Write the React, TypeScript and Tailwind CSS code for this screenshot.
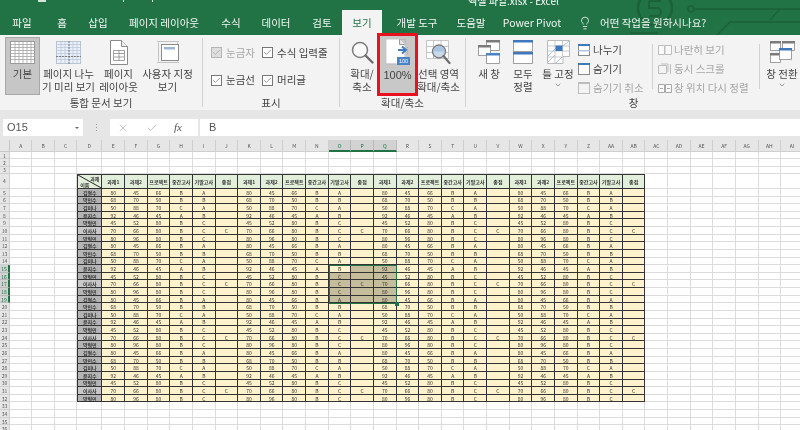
import { Check, ChevronDown, Lightbulb, X } from "lucide-react";

const tabs: [string, string][] = [
  ["파일", "w-[44px]"],
  ["홈", "w-[36px]"],
  ["삽입", "w-[36px]"],
  ["페이지 레이아웃", "w-[96px]"],
  ["수식", "w-[38px]"],
  ["데이터", "w-[52px]"],
  ["검토", "w-[40px]"],
];

const colNames = "A B C D E F G H I J K L M N O P Q R S T U V W X Y Z AA AB AC AD AE AF AG AH AI".split(" ");
const heads = ["과제1", "과제2", "프로젝트", "중간고사", "기말고사", "총점"];
const people: [string, string[]][] = [
  ["김철수", ["80", "45", "66", "B", "A", ""]],
  ["박민수", ["68", "70", "50", "B", "B", ""]],
  ["김미나", ["50", "88", "70", "C", "A", ""]],
  ["윤지수", ["92", "46", "45", "A", "B", ""]],
  ["박형민", ["45", "52", "80", "B", "C", ""]],
  ["이사사", ["70", "66", "80", "B", "C", "C"]],
  ["박형민", ["80", "96", "80", "B", "C", ""]],
];

function cellClass(r: number, c: number) {
  const inTable = r >= 4 && r <= 32 && c >= 4 && c <= 28;
  if (!inTable) return "border-r border-b border-[#dcdcdc]";
  const edges = `border-r border-b border-[#151515]${c === 4 ? " border-l" : ""}${r === 4 ? " border-t" : ""}`;
  if (r === 4) return `${edges} bg-[#e2efda] font-bold`;
  if (c === 4) return `${edges} ${(r - 5) % 7 === 5 ? "bg-[#c8c8c8]" : "bg-[#b4b4b4]"} font-bold`;
  const selected = r >= 15 && r <= 19 && c >= 15 && c <= 17 && !(r === 15 && c === 15);
  return `${edges} ${selected ? "bg-[#c6bd9d]" : "bg-[#fff2cc]"}`;
}

function Sheet() {
  const rows = Array.from({ length: 37 }, (_, i) => i + 1);
  return (
    <div className="relative h-[290px] overflow-hidden bg-white">
      <div className="grid w-[806px] grid-cols-[10px_22.4px_22.4px_22.4px_25.3px_repeat(31,22.64px)] grid-rows-[12px_7.4px_7.3px_7.3px_15px_repeat(33,7.64px)] text-[5px] leading-none text-[#333]">
        <div className="border-r border-b border-[#c8c8c8] bg-[#e6e6e6]" />
        {colNames.map((n, i) => (
          <div
            key={n}
            className={`flex items-center justify-center border-r ${
              i >= 14 && i <= 16
                ? "border-b-2 border-b-[#217346] border-r-[#bbb] bg-[#d2d2d2] text-[#1d6b41]"
                : "border-b border-[#cfcfcf] bg-[#e6e6e6] text-[#555]"
            }`}
          >
            {n}
          </div>
        ))}
        {rows.map((r) => (
          <div key={r} className="contents">
            <div
              className={`flex items-center justify-center border-b ${
                r >= 15 && r <= 19
                  ? "border-r-2 border-r-[#217346] border-b-[#bbb] bg-[#d2d2d2] text-[#1d6b41]"
                  : "border-r border-[#cfcfcf] bg-[#e6e6e6] text-[#555]"
              }`}
            >
              {r}
            </div>
            {colNames.map((_, i) => {
              const c = i + 1;
              let text = "";
              if (r === 4 && c > 4 && c <= 28) text = heads[(c - 5) % 6];
              if (r > 4 && r <= 32 && c >= 4 && c <= 28) {
                const p = people[(r - 5) % 7];
                text = c === 4 ? p[0] : p[1][(c - 5) % 6];
              }
              return (
                <div key={c} className={`relative flex items-center justify-center overflow-hidden whitespace-nowrap ${cellClass(r, c)}`}>
                  {r === 4 && c === 4 ? (
                    <>
                      <svg className="absolute inset-0 h-full w-full" viewBox="0 0 25 15" preserveAspectRatio="none">
                        <line x1="0" y1="0" x2="25" y2="15" stroke="#111" strokeWidth="1" />
                      </svg>
                      <span className="absolute top-[1px] right-[2px] font-bold">과제</span>
                      <span className="absolute bottom-[1px] left-[2px] font-bold">이름</span>
                    </>
                  ) : (
                    text
                  )}
                </div>
              );
            })}
          </div>
        ))}
      </div>
      {/* selection O15:Q19 */}
      <div className="absolute top-[125px] left-[329px] h-[39px] w-[68px] border-[1.5px] border-[#217346]" />
      <div className="absolute top-[162px] left-[395px] h-[4px] w-[4px] bg-[#217346]" />
    </div>
  );
}

function Big({ icon, lines, w, chevron }: { icon: React.ReactNode; lines: string[]; w: string; chevron?: boolean }) {
  return (
    <div className={`flex h-[58px] shrink-0 flex-col items-center ${w}`}>
      <div className="flex h-[30px] shrink-0 items-center justify-center">{icon}</div>
      {lines.map((l) => (
        <div key={l} className="h-[13px] text-center leading-[13px] whitespace-nowrap">
          {l}
        </div>
      ))}
      {chevron && <ChevronDown className="mt-[1px] h-[8px] w-[8px] text-[#666]" />}
    </div>
  );
}

function Box({ label, disabled }: { label: string; disabled?: boolean }) {
  return (
    <div className={`flex h-[25px] items-center gap-[4px] ${disabled ? "text-[#a6a6a6]" : ""}`}>
      <div className={`flex h-[11px] w-[11px] items-center justify-center border ${disabled ? "border-[#b5b5b5] bg-[#dedede]" : "border-[#777] bg-white"}`}>
        <Check className={`h-[9px] w-[9px] ${disabled ? "text-[#999]" : "text-[#555]"}`} strokeWidth={1.6} />
      </div>
      {label}
    </div>
  );
}

function Group({ label, w, children }: { label: string; w: string; children: React.ReactNode }) {
  return (
    <div className={`flex h-[75px] shrink-0 flex-col ${w}`}>
      <div className="flex h-[60px] shrink-0">{children}</div>
      <div className="h-[15px] text-center leading-[15px]">{label}</div>
    </div>
  );
}

const Sep = () => <div className="mt-[3px] h-[69px] w-px shrink-0 bg-[#d2d2d2]" />;

function GridIcon({ fill, line, dash }: { fill: string; line: string; dash?: boolean }) {
  return (
    <svg width="25" height="23" viewBox="0 0 25 23">
      <rect x="0.5" y="0.5" width="24" height="22" fill={fill} stroke={line} />
      {[3.5, 6.5, 9.5, 12.5, 15.5, 18.5].map((y) => (
        <line key={y} x1="0" x2="25" y1={y} y2={y} stroke={line} strokeWidth="0.7" />
      ))}
      {[5, 9, 13, 17, 21].map((x) => (
        <line key={x} y1="0" y2="23" x1={x} x2={x} stroke={line} strokeWidth="0.7" />
      ))}
      {dash && <line x1="13" x2="13" y1="0" y2="23" stroke="#7f7f7f" strokeWidth="1" strokeDasharray="2 1" />}
      {dash && <line x1="0" x2="25" y1="15.5" y2="15.5" stroke="#7f7f7f" strokeWidth="1" strokeDasharray="2 1" />}
    </svg>
  );
}

function PageLayoutIcon() {
  return (
    <svg width="18" height="25" viewBox="0 0 18 25">
      <path d="M.5.5h11l6 6v18H.5z" fill="#fff" stroke="#8a8a8a" />
      <path d="M11.5.5v6h6" fill="#eee" stroke="#8a8a8a" />
      <path d="M3.5 10.5h11v10h-11zM3.5 13.5h11M3.5 17h11M9 10.5v10" fill="none" stroke="#8a8a8a" strokeWidth=".8" />
    </svg>
  );
}

function CustomViewIcon() {
  return (
    <svg width="24" height="24" viewBox="0 0 24 24">
      <path d="M2.5 2.5v19M21.5 2.5v19M1 1.5h22M1 22.5h22" stroke="#b5b5b5" strokeWidth=".8" fill="none" />
      <rect x="5.5" y="4.5" width="17" height="16" fill="#fff" stroke="#8a8a8a" />
      <rect x="8" y="7" width="11" height="2.5" fill="#9db7d8" />
    </svg>
  );
}

function GlassIcon() {
  return (
    <svg width="23" height="23" viewBox="0 0 23 23">
      <circle cx="9" cy="9" r="7.5" fill="#fafafa" stroke="#7d7d7d" strokeWidth="1.5" />
      <path d="M14.5 14.5l7 7" stroke="#6d6d6d" strokeWidth="2.4" strokeLinecap="round" />
    </svg>
  );
}

function HundredIcon() {
  return (
    <svg width="24" height="26" viewBox="0 0 24 26">
      <path d="M.5.5h13l5 5v19H.5z" fill="#fff" />
      <path d="M13.5.5h6v6M21.5 8v7M.5 25h10" stroke="#a8a8a8" strokeDasharray="1 1" fill="none" />
      <path d="M13.5.5v5h5" fill="#e6e6e6" stroke="#9a9a9a" />
      <path d="M12 11h7M16 7.5L20 11l-4 3.5" fill="none" stroke="#3f7fc1" strokeWidth="2" />
      <rect x="11" y="18" width="13" height="8" fill="#4a84c4" />
      <text x="17.5" y="24.2" fontSize="5.5" fill="#fff" textAnchor="middle" fontFamily="Liberation Sans">100</text>
    </svg>
  );
}

function ZoomSelIcon() {
  return (
    <svg width="25" height="25" viewBox="0 0 25 25">
      <path d="M.5.5h22v18H.5zM.5 6.5h22M.5 12.5h22M7.5.5v18M15 .5v18" fill="#fff" stroke="#b9b9b9" strokeWidth=".8" />
      <circle cx="13" cy="11.5" r="6.5" fill="#c9d9ec" stroke="#7d7d7d" strokeWidth="1.4" />
      <path d="M7.5 11.5a5.5 5.5 0 0 1 11 0z" fill="#a9c4e3" />
      <path d="M17.5 16l6 7" stroke="#6d6d6d" strokeWidth="2.2" strokeLinecap="round" />
    </svg>
  );
}

function Win({ x, y, w, h, bar }: { x: number; y: number; w: number; h: number; bar: string }) {
  return (
    <g>
      <rect x={x + 0.5} y={y + 0.5} width={w - 1} height={h - 1} fill="#fff" stroke="#8a8a8a" strokeWidth=".8" />
      <rect x={x} y={y} width={w} height={2.5} fill={bar} />
    </g>
  );
}

function NewWindowIcon() {
  return (
    <svg width="22" height="24" viewBox="0 0 22 24">
      <Win x={8} y={0} w={14} h={11} bar="#7b7b7b" />
      <Win x={0} y={5} w={13} h={11} bar="#7b7b7b" />
      <Win x={8} y={13} w={14} h={11} bar="#4a84c4" />
    </svg>
  );
}

function ArrangeIcon() {
  return (
    <svg width="20" height="24" viewBox="0 0 20 24">
      <Win x={0} y={0} w={20} h={12} bar="#3f79bb" />
      <Win x={0} y={12} w={20} h={12} bar="#3f79bb" />
    </svg>
  );
}

function FreezeIcon() {
  return (
    <svg width="23" height="24" viewBox="0 0 23 24">
      <path d="M.5.5h22v16H16v7H.5z" fill="#fff" stroke="#a9a9a9" strokeWidth=".8" />
      <path d="M.5 6h22M.5 11h22M.5 17h15M8 .5v23M15.5 .5v16" stroke="#b5b5b5" strokeWidth=".7" fill="none" />
      <path d="M1 16l8-8M1 22l7-7M9 23l6-6M16 6l6-5" stroke="#9ec0df" strokeWidth=".9" />
      <rect x="8.5" y="5.5" width="7" height="5.5" fill="#3f79bb" />
    </svg>
  );
}

function SmallWin({ gray, split }: { gray?: boolean; split?: boolean }) {
  return (
    <svg width="12" height="12" viewBox="0 0 12 12" className="shrink-0">
      <rect x=".5" y=".5" width="11" height="11" fill={gray ? "#f3f3f3" : "#fff"} stroke={gray ? "#bdbdbd" : "#8a8a8a"} />
      <rect x="0" y="0" width="12" height="2" fill={gray ? "#bdbdbd" : "#3f79bb"} />
      {split && <rect x="0" y="6" width="12" height="1.4" fill="#a9c4e3" />}
    </svg>
  );
}

function SideBySideIcon({ kind }: { kind: number }) {
  return (
    <svg width="14" height="12" viewBox="0 0 14 12" className="shrink-0">
      {kind === 0 && <path d="M.5 1.5h6v9h-6zM7 1.5h6.5v9H7z" fill="#fafafa" stroke="#bdbdbd" />}
      {kind === 1 && <path d="M.5 2.5h8v8h-8zM3 1h7v8M12.5 1v10" fill="none" stroke="#bdbdbd" />}
      {kind === 2 && <path d="M.5 2.5h6v8h-6zM7.5 2.5h6v8h-6zM2 6.5h3M9 6.5h3" fill="#fafafa" stroke="#a8a8a8" />}
    </svg>
  );
}

function SwitchIcon() {
  return (
    <svg width="25" height="22" viewBox="0 0 25 22">
      <Win x={0} y={0} w={11} h={10} bar="#7b7b7b" />
      <Win x={12} y={0} w={13} h={10} bar="#7b7b7b" />
      <Win x={0} y={12} w={11} h={10} bar="#7b7b7b" />
      <Win x={9} y={7} w={13} h={12} bar="#3f79bb" />
    </svg>
  );
}

export default function App() {
  return (
    <div className="h-[430px] w-[800px] overflow-hidden bg-[#e6e6e6] font-['Noto_Sans_CJK_KR','Noto_Sans',sans-serif] text-[10.5px] text-[#444] blur-[0.35px]">
      {/* title + tabs */}
      <div className="relative h-[35px] overflow-hidden bg-[#217346] text-[#f2f7f4]">
        <svg className="absolute top-0 left-[600px]" width="200" height="35" viewBox="0 0 200 35" fill="none" stroke="#1b6239" strokeWidth="1.6">
          <circle cx="55" cy="8" r="17" strokeWidth="2.5" />
          <path d="M49 1h12M49 1v7h8a4 4 0 0 1 0 8h-8" strokeWidth="2" />
          <circle cx="91" cy="9" r="3" />
          <path d="M94 9h106M117 35l13-13h70M30 33h28M180 9l-10 11" />
        </svg>
        <div className="absolute -top-[7px] left-[468px] whitespace-nowrap text-[10px] text-white">엑셀 파일.xlsx - Excel</div>
        <div className="absolute top-0 left-[38px] h-[2px] w-[8px] bg-[#d5e5db]" />
        <div className="absolute top-0 left-[123px] h-[2px] w-[30px] border-x border-[#d5e5db]" />
        <div className="h-[10px]" />
        <div className="relative flex h-[25px] items-center">
          {tabs.map(([t, w]) => (
            <div key={t} className={`text-center ${w}`}>
              {t}
            </div>
          ))}
          <div className="flex h-full w-[40px] items-center justify-center bg-[#f3f3f3] text-[#217346]">보기</div>
          <div className="w-[70px] text-center">개발 도구</div>
          <div className="w-[38px] text-center">도움말</div>
          <div className="w-[84px] text-center">Power Pivot</div>
          <Lightbulb className="ml-[4px] h-[14px] w-[14px]" strokeWidth={1.4} />
          <div className="ml-[8px] whitespace-nowrap">어떤 작업을 원하시나요?</div>
        </div>
      </div>

      {/* ribbon */}
      <div className="flex h-[75px] bg-[#f3f3f3]">
        <Group label="통합 문서 보기" w="w-[202px]">
          <div className="flex pt-[2px] pl-[5px]">
            <div className="shrink-0">
              <div className="flex h-[58px] w-[35px] flex-col items-center border border-[#a8a8a8] bg-[#c6c6c6]">
                <div className="flex h-[29px] items-center">
                  <GridIcon fill="#fff" line="#9a9a9a" />
                </div>
                <div className="leading-[13px]">기본</div>
              </div>
            </div>
            <Big w="w-[57px]" lines={["페이지 나누", "기 미리 보기"]} icon={<GridIcon fill="#e9f0fa" line="#b8c4d4" dash />} />
            <Big w="w-[43px]" lines={["페이지", "레이아웃"]} icon={<PageLayoutIcon />} />
            <Big w="w-[55px]" lines={["사용자 지정", "보기"]} icon={<CustomViewIcon />} />
          </div>
        </Group>
        <Sep />
        <Group label="표시" w="w-[136px]">
          <div className="grid grid-cols-[51px_auto] pt-[5px] pl-[8px]">
            <Box label="눈금자" disabled />
            <Box label="수식 입력줄" />
            <Box label="눈금선" />
            <Box label="머리글" />
          </div>
        </Group>
        <Sep />
        <Group label="확대/축소" w="w-[125px]">
          <div className="flex pt-[2px] pl-[7px]">
            <Big w="w-[30px]" lines={["확대/", "축소"]} icon={<GlassIcon />} />
            <div className="relative z-10 -mt-[4px] flex h-[63px] w-[41px] shrink-0 flex-col items-center border-[3px] border-[#e8111d] bg-[#c8c8c8]">
              <div className="flex h-[31px] items-center">
                <HundredIcon />
              </div>
              <div className="mt-[2px] font-['Liberation_Sans',sans-serif] text-[11px] leading-[13px]">100%</div>
            </div>
            <Big w="w-[41px]" lines={["선택 영역", "확대/축소"]} icon={<ZoomSelIcon />} />
          </div>
        </Group>
        <Sep />
        <Group label="창" w="w-[335px]">
          <div className="flex pt-[2px] pl-[6px]">
            <Big w="w-[34px]" lines={["새 창"]} icon={<NewWindowIcon />} />
            <Big w="w-[34px]" lines={["모두", "정렬"]} icon={<ArrangeIcon />} />
            <Big w="w-[36px]" lines={["틀 고정"]} icon={<FreezeIcon />} chevron />
            <div className="w-[76px] shrink-0 pt-[3px] pl-[2px]">
              <div className="flex h-[19px] items-center gap-[3px]"><SmallWin split />나누기</div>
              <div className="flex h-[19px] items-center gap-[3px]"><SmallWin />숨기기</div>
              <div className="flex h-[19px] items-center gap-[3px] text-[#a6a6a6]"><SmallWin gray />숨기기 취소</div>
            </div>
            <div className="mt-[7px] h-[45px] w-px shrink-0 bg-[#d2d2d2]" />
            <div className="w-[106px] shrink-0 pt-[3px] pl-[5px] text-[#a6a6a6]">
              <div className="flex h-[19px] items-center gap-[2px]"><SideBySideIcon kind={0} />나란히 보기</div>
              <div className="flex h-[19px] items-center gap-[2px]"><SideBySideIcon kind={1} />동시 스크롤</div>
              <div className="flex h-[19px] items-center gap-[2px] whitespace-nowrap"><SideBySideIcon kind={2} />창 위치 다시 정렬</div>
            </div>
            <div className="mt-[7px] h-[45px] w-px shrink-0 bg-[#d2d2d2]" />
            <Big w="w-[44px]" lines={["창 전환"]} icon={<SwitchIcon />} chevron />
          </div>
        </Group>
      </div>

      {/* formula bar */}
      <div className="flex h-[30px] items-start pt-[9px] pl-[3px]">
        <div className="flex h-[17px] w-[80px] items-center justify-between bg-white pr-[4px] pl-[4px] font-['Liberation_Sans',sans-serif] text-[11px] text-[#555]">
          O15
          <span className="h-0 w-0 border-x-[2px] border-t-[2px] border-x-transparent border-t-[#666]" />
        </div>
        <div className="ml-[13px] flex h-[17px] w-[2px] flex-col justify-center gap-[2px]">
          <span className="h-px w-px bg-[#999]" />
          <span className="h-px w-px bg-[#999]" />
          <span className="h-px w-px bg-[#999]" />
        </div>
        <div className="ml-[12px] flex h-[17px] w-[88px] items-center bg-white pl-[7px] text-[#b5b5b5]">
          <X className="h-[12px] w-[12px]" strokeWidth={1.5} />
          <Check className="ml-[17px] h-[12px] w-[12px]" strokeWidth={1.5} />
          <span className="ml-[16px] font-['Liberation_Serif',serif] text-[11px] text-[#555] italic">fx</span>
        </div>
        <div className="ml-[2px] flex h-[17px] flex-1 items-center bg-white pl-[9px] font-['Liberation_Sans',sans-serif] text-[11px] text-[#555]">B</div>
      </div>

      <Sheet />
    </div>
  );
}
